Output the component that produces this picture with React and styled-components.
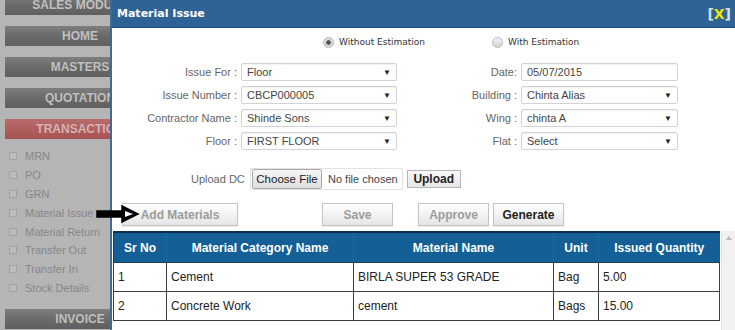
import React from "react";
import styled, { createGlobalStyle } from "styled-components";

const menuTop = ["SALES MODULE", "HOME", "MASTERS", "QUOTATION"];
const links = [
  "MRN",
  "PO",
  "GRN",
  "Material Issue",
  "Material Return",
  "Transfer Out",
  "Transfer In",
  "Stock Details",
];

const leftFields = [
  { label: "Issue For :", value: "Floor" },
  { label: "Issue Number :", value: "CBCP000005" },
  { label: "Contractor Name :", value: "Shinde Sons" },
  { label: "Floor :", value: "FIRST FLOOR" },
];
const rightFields = [
  { label: "Date:", value: "05/07/2015", plain: true },
  { label: "Building :", value: "Chinta Alias" },
  { label: "Wing :", value: "chinta A" },
  { label: "Flat :", value: "Select" },
];

const rows = [
  ["1", "Cement", "BIRLA SUPER 53 GRADE", "Bag", "5.00"],
  ["2", "Concrete Work", "cement", "Bags", "15.00"],
];

export default function App() {
  return (
    <>
      <GlobalStyle />
      <Page>
        <Sidebar>
          {menuTop.map((m, i) => (
            <MenuBar key={m} $first={i === 0}>
              {m}
            </MenuBar>
          ))}
          <MenuBar $active>TRANSACTION</MenuBar>
          <LinkList>
            {links.map((l) => (
              <LinkItem key={l}>
                <Bullet />
                {l}
              </LinkItem>
            ))}
          </LinkList>
          <MenuBar>INVOICE</MenuBar>
        </Sidebar>

        <Modal>
          <Header>
            <Title>Material Issue</Title>
            <Close>
              [<span>X</span>]
            </Close>
          </Header>

          <RadioRow>
            <RadioOption $width={169}>
              <Radio $checked />
              Without Estimation
            </RadioOption>
            <RadioOption>
              <Radio />
              With Estimation
            </RadioOption>
          </RadioRow>

          <FormGrid>
            {leftFields.map((f, i) => (
              <React.Fragment key={f.label}>
                <Label>{f.label}</Label>
                <Select>
                  {f.value}
                  <Caret>▼</Caret>
                </Select>
                <Label>{rightFields[i].label}</Label>
                <Select>
                  {rightFields[i].value}
                  {!rightFields[i].plain && <Caret>▼</Caret>}
                </Select>
              </React.Fragment>
            ))}
          </FormGrid>

          <UploadRow>
            <Label>Upload DC</Label>
            <FileBox>
              <ChooseFile>Choose File</ChooseFile>
              <FileText>No file chosen</FileText>
            </FileBox>
            <UploadButton>Upload</UploadButton>
          </UploadRow>

          <ButtonRow>
            <ActionButton $width={116} $disabled>
              Add Materials
            </ActionButton>
            <ActionButton $width={71} $gap={84} $disabled>
              Save
            </ActionButton>
            <ActionButton $width={71} $gap={25} $disabled>
              Approve
            </ActionButton>
            <ActionButton $width={71} $gap={4}>
              Generate
            </ActionButton>
          </ButtonRow>

          <TableArea>
            <Table>
              <colgroup>
                <col style={{ width: 53 }} />
                <col style={{ width: 187 }} />
                <col style={{ width: 200 }} />
                <col style={{ width: 45 }} />
                <col style={{ width: 121 }} />
              </colgroup>
              <thead>
                <tr>
                  <Th>Sr No</Th>
                  <Th>Material Category Name</Th>
                  <Th>Material Name</Th>
                  <Th>Unit</Th>
                  <Th>Issued Quantity</Th>
                </tr>
              </thead>
              <tbody>
                {rows.map((r) => (
                  <tr key={r[0]}>
                    {r.map((c, i) => (
                      <Td key={i}>{c}</Td>
                    ))}
                  </tr>
                ))}
              </tbody>
            </Table>
            <Scrollbar>
              <ScrollArrow />
            </Scrollbar>
          </TableArea>
        </Modal>

        <Pointer width="44" height="20" viewBox="0 0 44 20">
          <path
            d="M1 7 H26 V2 L42 10 L26 18 V13 H1 Z"
            fill="#000"
            stroke="#000"
            strokeWidth="1.5"
            strokeLinejoin="miter"
          />
          <path d="M29 7 L37 10 L29 13 Z" fill="#fff" />
        </Pointer>
      </Page>
    </>
  );
}

// Styled Components
const GlobalStyle = createGlobalStyle`
  body {
    margin: 0;
    font-family: "Liberation Sans", Arial, sans-serif;
    background: #fff;
  }
`;

const Page = styled.div`
  display: flex;
  width: 735px;
  height: 330px;
  overflow: hidden;
  position: relative;
`;

const Sidebar = styled.div`
  width: 110px;
  flex-shrink: 0;
  overflow: hidden;
  background: #b5b5b5;
  padding-left: 5px;
  box-sizing: border-box;
  display: flex;
  flex-direction: column;
`;

const MenuBar = styled.div`
  flex-shrink: 0;
  width: 150px;
  height: 20px;
  margin-top: ${(p) => (p.$first ? "-5px" : "11px")};
  background: ${(p) =>
    p.$active
      ? "linear-gradient(#b96b6b, #a65252)"
      : "linear-gradient(#7e7e7e 0%, #6a6a6a 50%, #5f5f5f 100%)"};
  color: ${(p) => (p.$active ? "#d6b2b2" : "#c0c0c0")};
  font-size: 12px;
  font-weight: bold;
  display: flex;
  align-items: center;
  justify-content: center;
  white-space: nowrap;
`;

const LinkList = styled.div`
  display: flex;
  flex-direction: column;
  padding-top: 8px;
  padding-bottom: 1px;
`;

const LinkItem = styled.div`
  height: 18.8px;
  display: flex;
  align-items: center;
  gap: 8px;
  font-size: 11px;
  color: #878787;
  white-space: nowrap;
`;

const Bullet = styled.span`
  width: 6px;
  height: 6px;
  margin-left: 4px;
  border: 1px solid #a2a2a2;
  background: #bcbcbc;
  flex-shrink: 0;
`;

const Modal = styled.div`
  flex: 1;
  display: flex;
  flex-direction: column;
  background: #fff;
  border-left: 2px solid #3d6b99;
  overflow: hidden;
`;

const Header = styled.div`
  height: 27px;
  flex-shrink: 0;
  background: #2f6395;
  border-bottom: 1px solid #24507c;
  display: flex;
  align-items: center;
  justify-content: space-between;
  padding: 0 4px 0 5px;
`;

const Title = styled.div`
  font-family: "DejaVu Sans", Verdana, sans-serif;
  font-size: 11px;
  font-weight: bold;
  color: #fff;
`;

const Close = styled.div`
  font-family: "DejaVu Sans", Verdana, sans-serif;
  font-size: 14px;
  font-weight: bold;
  color: #d5e3f2;

  span {
    color: #f2e600;
  }
`;

const RadioRow = styled.div`
  display: flex;
  align-items: center;
  height: 14px;
  margin-top: 7px;
  padding-left: 211px;
  font-family: "DejaVu Sans", Verdana, sans-serif;
  font-size: 9px;
  color: #333;
`;

const RadioOption = styled.label`
  display: flex;
  align-items: center;
  gap: 5px;
  width: ${(p) => (p.$width ? `${p.$width}px` : "auto")};
`;

const Radio = styled.span`
  width: 9px;
  height: 9px;
  border-radius: 50%;
  border: 1px solid #b9b9b9;
  background: ${(p) =>
    p.$checked
      ? "radial-gradient(circle, #555 0 2px, #d8d8d8 2.5px)"
      : "linear-gradient(#f4f4f4, #d2d2d2)"};
`;

const FormGrid = styled.div`
  display: grid;
  grid-template-columns: 125px 156px 116px 157px;
  grid-auto-rows: 18px;
  column-gap: 4px;
  row-gap: 5px;
  margin-top: 14px;
`;

const Label = styled.div`
  font-size: 11px;
  color: #666;
  display: flex;
  align-items: center;
  justify-content: flex-end;
  white-space: nowrap;
`;

const Select = styled.div`
  position: relative;
  display: flex;
  align-items: center;
  padding-left: 5px;
  border: 1px solid #d3d3d3;
  border-radius: 2px;
  box-shadow: inset 0 1px 1px rgba(0, 0, 0, 0.05);
  font-size: 11px;
  color: #444;
  background: #fff;
`;

const Caret = styled.span`
  position: absolute;
  right: 5px;
  top: 4px;
  font-size: 8px;
  color: #222;
`;

const UploadRow = styled.div`
  display: flex;
  align-items: center;
  height: 22px;
  margin-top: 18px;
  padding-left: 79px;

  ${Label} {
    width: 53px;
    justify-content: flex-start;
  }
`;

const FileBox = styled.div`
  display: flex;
  align-items: center;
  gap: 6px;
  height: 22px;
  margin-left: 6px;
  padding: 0 4px 0 1px;
  border: 1px solid #e3e3e3;
  box-sizing: border-box;
`;

const ChooseFile = styled.div`
  width: 70px;
  height: 20px;
  box-sizing: border-box;
  display: flex;
  align-items: center;
  justify-content: center;
  border: 1px solid #a9a9a9;
  border-radius: 2px;
  background: linear-gradient(#f6f6f6, #dedede);
  font-size: 11.5px;
  color: #222;
`;

const FileText = styled.span`
  font-size: 11px;
  color: #444;
`;

const UploadButton = styled.div`
  width: 54px;
  height: 18px;
  margin-left: 4px;
  box-sizing: border-box;
  display: flex;
  align-items: center;
  justify-content: center;
  border: 1px solid #b5b5b5;
  background: linear-gradient(#fafafa, #e6e6e6);
  font-size: 12px;
  font-weight: bold;
  color: #222;
`;

const ButtonRow = styled.div`
  display: flex;
  align-items: center;
  margin-top: 13px;
  padding-left: 10px;
`;

const ActionButton = styled.div`
  width: ${(p) => p.$width}px;
  height: 23px;
  margin-left: ${(p) => p.$gap || 0}px;
  box-sizing: border-box;
  display: flex;
  align-items: center;
  justify-content: center;
  border: 1px solid #c4c4c4;
  box-shadow: 0 1px 1px rgba(0, 0, 0, 0.08);
  background: linear-gradient(#ffffff, #e5e5e5);
  font-size: 12px;
  font-weight: bold;
  color: ${(p) => (p.$disabled ? "#9c9c9c" : "#222")};
`;

const TableArea = styled.div`
  display: flex;
  margin-top: 5px;
  padding-left: 1px;
  flex: 1;
  min-height: 0;
`;

const Table = styled.table`
  width: 606px;
  table-layout: fixed;
  border-collapse: collapse;
  align-self: flex-start;
  border-top: 2px solid #0d2f4e;
`;

const Th = styled.th`
  height: 29px;
  padding: 0;
  background: #135f96;
  color: #fff;
  font-size: 12px;
  font-weight: bold;
  text-align: center;
  border-left: 1px solid #1b6aa2;
  border-bottom: 1px solid #1f3c55;

  &:first-child {
    border-left: 1px solid #333;
  }
`;

const Td = styled.td`
  height: 28px;
  padding: 0 0 0 4px;
  border: 1px solid #3c3c3c;
  font-size: 12px;
  color: #222;
  white-space: nowrap;
  overflow: hidden;
`;

const Scrollbar = styled.div`
  width: 14px;
  margin-left: 1px;
  background: #f1f1f1;
  border-left: 1px solid #e2e2e2;
  display: flex;
  justify-content: center;
`;

const ScrollArrow = styled.span`
  margin-top: 5px;
  width: 0;
  height: 0;
  border-left: 3px solid transparent;
  border-right: 3px solid transparent;
  border-bottom: 4px solid #b9b9b9;
`;

const Pointer = styled.svg`
  position: absolute;
  left: 96px;
  top: 204px;
`;
